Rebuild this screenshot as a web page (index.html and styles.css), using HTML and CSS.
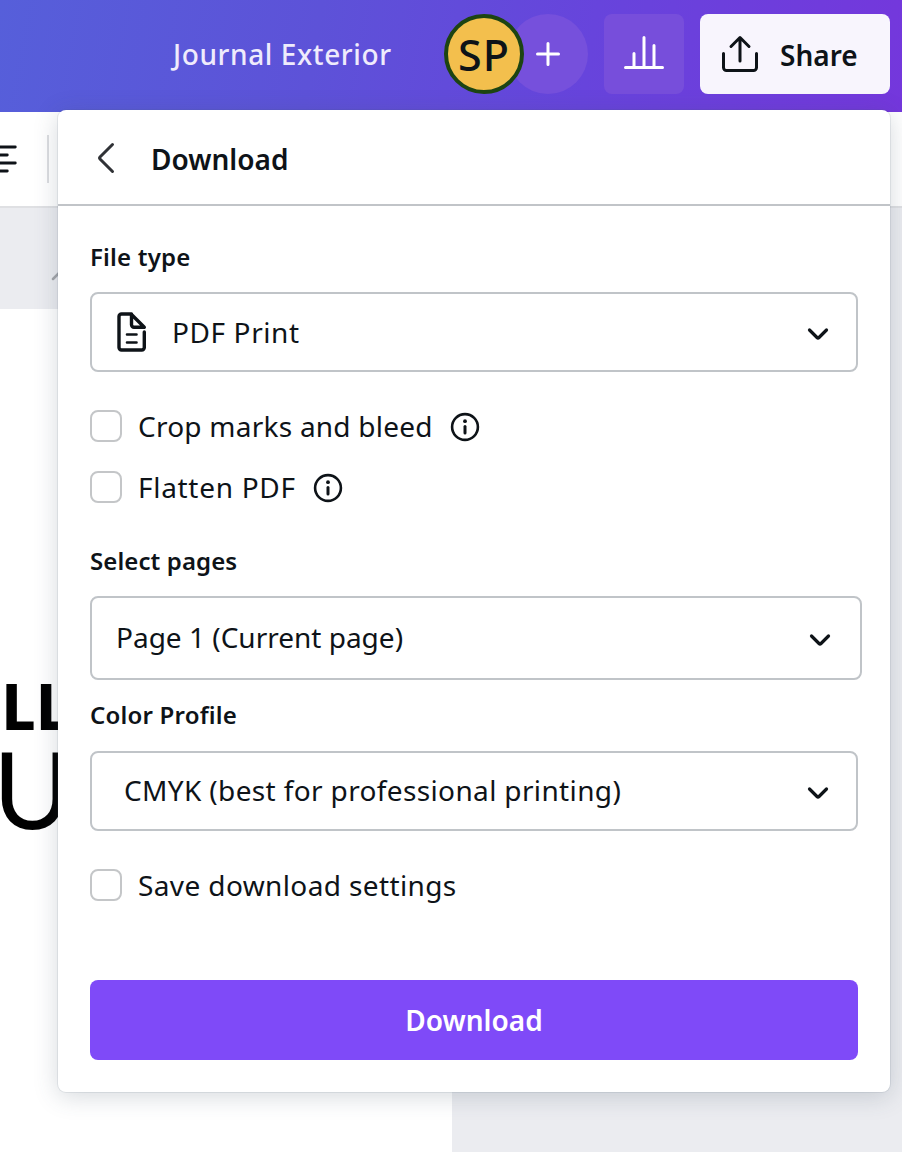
FILE: index.html
```html
<!DOCTYPE html>
<html lang="en">
<head>
    <meta charset="UTF-8">
    <meta name="viewport" content="width=device-width, initial-scale=1.0">
    <title>Journal Exterior</title>
    <link rel="stylesheet" href="styles.css">
</head>
<body>
    <header class="topbar">
        <div class="doc-title">Journal Exterior</div>
        <div class="people">
            <div class="avatar">SP</div>
            <button class="add-person" aria-label="Add people">
                <svg width="24" height="24" viewBox="0 0 24 24"><path d="M12 1.500v21M1.500 12h21"/></svg>
            </button>
        </div>
        <button class="insights" aria-label="Insights">
            <svg width="40" height="36" viewBox="0 0 40 36"><path d="M1.500 31.500h37M10 31V17.500M20 31V1.500M30 31V9.500"/></svg>
        </button>
        <button class="share">
            <svg width="40" height="40" viewBox="0 0 40 40"><path d="M3.500 19.500v14a3 3 0 0 0 3 3h27a3 3 0 0 0 3-3v-14M20 27V4M11 12.500l9-9 9 9"/></svg>
            <span>Share</span>
        </button>
    </header>

    <div class="toolbar">
        <svg class="align-icon" width="18" height="30" viewBox="0 0 18 30"><path d="M-4 3h19.300M-4 11h11.300M-4 19h19.300M-4 27h11.300"/></svg>
        <div class="divider"></div>
    </div>

    <main class="canvas">
        <div class="canvas-head">
            <svg width="20" height="14" viewBox="0 0 20 14"><path d="M2 11l9-9 9 9"/></svg>
        </div>
        <div class="page">
            <div class="line-bold">LL</div>
            <div class="line-light">U</div>
        </div>
    </main>

    <section class="panel">
        <div class="panel-header">
            <svg class="back" width="20" height="32" viewBox="0 0 20 32"><path d="M16.500 2.500L4 15q-1 1 0 2l12.500 12.500"/></svg>
            <h1>Download</h1>
        </div>
        <div class="panel-body">
            <h2 class="type-label">File type</h2>
            <div class="select">
                <svg class="file-icon" width="32" height="44" viewBox="0 0 32 44"><path d="M28.300 23v15.500a2.500 2.500 0 0 1-2.500 2.500H5.500A2.500 2.500 0 0 1 3 38.500v-31A2.500 2.500 0 0 1 5.500 5H15l13.300 13.300H18a2.500 2.500 0 0 1-2.500-2.500V5"/><path class="rule" d="M11 25.500h9.500M11 33.500h9.500"/></svg>
                <span class="pdf-text">PDF Print</span>
                <svg class="chevron" width="24" height="16" viewBox="0 0 24 16"><path d="M3.500 4l7.500 7.500q1 1 2 0L20.500 4"/></svg>
            </div>

            <div class="check-row first">
                <span class="box"></span>
                <span class="crop-text">Crop marks and bleed</span>
                <svg class="info" width="30" height="30" viewBox="0 0 30 30"><circle cx="15" cy="15" r="12.900"/><path d="M15 14.500v6.500"/><circle class="dot" cx="15" cy="9.200" r="1.900"/></svg>
            </div>
            <div class="check-row">
                <span class="box"></span>
                <span class="flatten-text">Flatten PDF</span>
                <svg class="info" width="30" height="30" viewBox="0 0 30 30"><circle cx="15" cy="15" r="12.900"/><path d="M15 14.500v6.500"/><circle class="dot" cx="15" cy="9.200" r="1.900"/></svg>
            </div>

            <h2 class="pages-label">Select pages</h2>
            <div class="select pages">
                <span class="page-text">Page 1 (Current page)</span>
                <svg class="chevron" width="24" height="16" viewBox="0 0 24 16"><path d="M3.500 4l7.500 7.500q1 1 2 0L20.500 4"/></svg>
            </div>

            <h2 class="color-label">Color Profile</h2>
            <div class="select color">
                <span class="color-text">CMYK (best for professional printing)</span>
                <svg class="chevron" width="24" height="16" viewBox="0 0 24 16"><path d="M3.500 4l7.500 7.500q1 1 2 0L20.500 4"/></svg>
            </div>

            <div class="check-row save">
                <span class="box"></span>
                <span class="save-text">Save download settings</span>
            </div>

            <button class="download">Download</button>
        </div>
    </section>
</body>
</html>
```
FILE: styles.css
```css
* {
    box-sizing: border-box;
}
body {
    margin: 0;
    height: 1152px;
    position: relative;
    overflow: hidden;
    font-family: "Noto Sans", sans-serif;
    font-size: 28px;
    color: #0e1318;
    background: #ebecf0;
}
button {
    border: none;
    padding: 0;
    font: inherit;
    color: inherit;
}
svg {
    display: block;
    flex: none;
    fill: none;
    stroke: #0e1318;
    stroke-width: 3;
    stroke-linecap: round;
    stroke-linejoin: round;
}
h1, h2 {
    margin: 0;
    font-weight: 600;
    white-space: nowrap;
}

/* top bar */
.topbar {
    height: 112px;
    padding: 14px 12px 0 173px;
    display: flex;
    align-items: flex-start;
    background: linear-gradient(100deg, #565fda 0%, #5d52d8 35%, #6744dc 65%, #7437dc 100%);
}
.doc-title {
    width: 271px;
    line-height: 80px;
    font-weight: 500;
    letter-spacing: 0.6px;
    color: #efebfc;
    white-space: nowrap;
}
.people {
    display: flex;
    width: 160px;
}
.avatar {
    width: 80px;
    height: 80px;
    border: 4px solid #1d4412;
    border-radius: 50%;
    background: #f3bf4d;
    line-height: 73px;
    text-align: center;
    font-size: 43px;
    font-weight: 500;
    letter-spacing: 1px;
    z-index: 1;
}
.add-person {
    width: 80px;
    height: 80px;
    margin-left: -16px;
    border-radius: 50%;
    background: #7650dc;
    display: flex;
    align-items: center;
    justify-content: center;
}
.add-person svg,
.insights svg {
    stroke: #fff;
}
.insights {
    width: 80px;
    height: 80px;
    border-radius: 8px;
    background: #774edb;
    display: flex;
    align-items: center;
    justify-content: center;
}
.share {
    width: 190px;
    height: 80px;
    margin-left: 16px;
    padding-left: 20px;
    border-radius: 8px;
    background: #f8f5fd;
    display: flex;
    align-items: center;
    gap: 20px;
    font-weight: 600;
}
.share span {
    padding-top: 1px;
}

/* editor behind the panel */
.toolbar {
    height: 96px;
    border-bottom: 2px solid #dfe0e3;
    background: #fff;
    display: flex;
    align-items: center;
}
.align-icon {
    stroke-width: 2.8;
}
.divider {
    width: 2px;
    height: 48px;
    margin-left: 29px;
    background: #dcdde0;
}
.canvas-head {
    height: 101px;
    padding: 60px 0 0 51px;
}
.canvas-head svg {
    stroke: #a3a5aa;
    stroke-width: 2.5;
}
.page {
    width: 452px;
    height: 843px;
    padding-top: 363px;
    background: #fff;
    color: #000;
    font-family: Lato, sans-serif;
}
.line-bold {
    padding-left: 2px;
    font-size: 62px;
    line-height: 68px;
    font-weight: 800;
    letter-spacing: 2px;
}
.line-light {
    margin-left: -7px;
    padding-top: 3px;
    font-size: 107px;
    line-height: 90px;
}

/* download panel */
.panel {
    position: absolute;
    left: 58px;
    top: 110px;
    width: 832px;
    height: 982px;
    border-radius: 8px;
    background: #fff;
    box-shadow: 0 0 0 1px rgba(64, 87, 109, 0.1), 0 4px 24px rgba(57, 76, 96, 0.22);
}
.panel-header {
    height: 96px;
    padding: 0 0 0 38px;
    border-bottom: 2px solid #c1c4c8;
    display: flex;
    align-items: center;
}
.panel-header h1 {
    margin-left: 35px;
    padding-top: 3px;
    font-size: 28px;
    line-height: 40px;
}
.back {
    margin-top: 2px;
    stroke: #303236;
}
.panel-body {
    padding: 35px 32px 0;
}
h2 {
    font-size: 24px;
    line-height: 32px;
}
.type-label {
    letter-spacing: 0.2px;
}
.select {
    width: 768px;
    height: 80px;
    margin-top: 19px;
    padding: 0 26px 0 24px;
    border: 2px solid #c0c4c8;
    border-radius: 8px;
    display: flex;
    align-items: center;
    white-space: nowrap;
}
.file-icon {
    stroke-width: 3.4;
    margin-bottom: 2px;
}
.file-icon .rule {
    stroke-width: 2.6;
}
.pdf-text {
    margin-left: 24px;
    letter-spacing: 0.6px;
}
.chevron {
    margin: 4px 0 0 auto;
    stroke-width: 3.2;
}
.check-row {
    height: 32px;
    margin-top: 29px;
    display: flex;
    align-items: center;
    white-space: nowrap;
}
.check-row.first {
    margin-top: 38px;
}
.box {
    width: 32px;
    height: 32px;
    margin-right: 16px;
    border: 2px solid #c4c6c8;
    border-radius: 8px;
}
.crop-text {
    letter-spacing: 0.24px;
}
.flatten-text {
    letter-spacing: 0.7px;
}
.info {
    margin: 2px 0 0 17px;
    stroke-width: 2.6;
}
.info path {
    stroke-width: 3;
}
.info .dot {
    fill: #0e1318;
    stroke: none;
}
.pages-label {
    margin-top: 42px;
    letter-spacing: 0.1px;
}
.select.pages {
    width: 772px;
    height: 84px;
    margin-top: 19px;
    padding-right: 28px;
}
.page-text {
    margin-bottom: 2px;
}
.color-label {
    margin-top: 19px;
    letter-spacing: 0.2px;
}
.select.color {
    margin-top: 20px;
    padding-left: 32px;
}
.color-text {
    margin-bottom: 2px;
    letter-spacing: 0.36px;
}
.check-row.save {
    margin-top: 38px;
}
.save-text {
    letter-spacing: 0.38px;
}
.download {
    width: 768px;
    height: 80px;
    margin-top: 79px;
    border-radius: 8px;
    background: #7f4af8;
    color: #fff;
    font-weight: 600;
}
```
